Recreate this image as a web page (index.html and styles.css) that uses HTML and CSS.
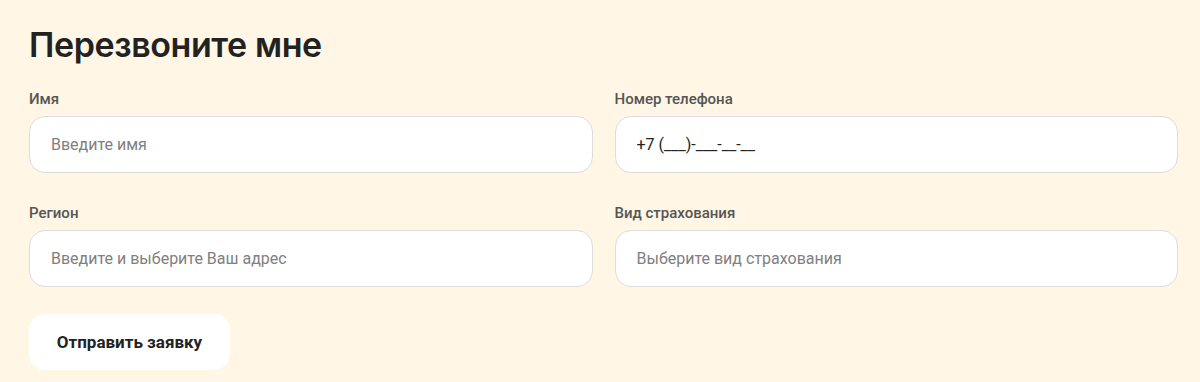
FILE: index.html
```html
<!DOCTYPE html>
<html>
<head>
    <title>Перезвоните мне</title>
    <link rel="stylesheet" href="styles.css">
</head>
<body>
    <div id="callback">
        <h1>Перезвоните мне</h1>
        <form id="callback-form">
            <div class="field">
                <label for="name">Имя</label>
                <input type="text" id="name" placeholder="Введите имя">
            </div>
            <div class="field">
                <label for="phone">Номер телефона</label>
                <input type="text" id="phone" class="filled" value="+7 (___)-___-__-__">
            </div>
            <div class="field">
                <label for="region">Регион</label>
                <input type="text" id="region" placeholder="Введите и выберите Ваш адрес">
            </div>
            <div class="field">
                <label for="kind">Вид страхования</label>
                <input type="text" id="kind" placeholder="Выберите вид страхования">
            </div>
        </form>
        <button type="button" class="submit">Отправить заявку</button>
    </div>
</body>
</html>
```

FILE: styles.css
```css
body {
    font-family: Roboto, "Noto Sans", sans-serif;
    background-color: #fff6e5;
    margin: 0;
}
#callback {
    padding: 24px 22px 12px 29px;
}
h1 {
    font-family: Inter, "Noto Sans", sans-serif;
    font-size: 34px;
    font-weight: 600;
    color: #222;
    margin: 0 0 24px 0;
    letter-spacing: -0.4px;
    line-height: 42px;
}
#callback-form {
    display: grid;
    grid-template-columns: 1fr 1fr;
    column-gap: 22px;
    row-gap: 31px;
}
.field label {
    display: block;
    font-size: 15px;
    font-weight: 500;
    color: #555;
    margin-bottom: 8px;
    line-height: 18px;
}
.field input {
    display: block;
    width: 100%;
    box-sizing: border-box;
    height: 57px;
    padding: 0 21px;
    border: 1px solid #dcdcdc;
    border-radius: 16px;
    background-color: #fff;
    font-family: Roboto, sans-serif;
    font-size: 16px;
    color: #222;
    outline: none;
}
.field input::placeholder {
    color: #808080;
}
.submit {
    margin-top: 27px;
    width: 201px;
    height: 56px;
    border: none;
    border-radius: 16px;
    background-color: #fff;
    font-family: Roboto, sans-serif;
    font-size: 17px;
    font-weight: 700;
    color: #222;
    cursor: pointer;
}
```
